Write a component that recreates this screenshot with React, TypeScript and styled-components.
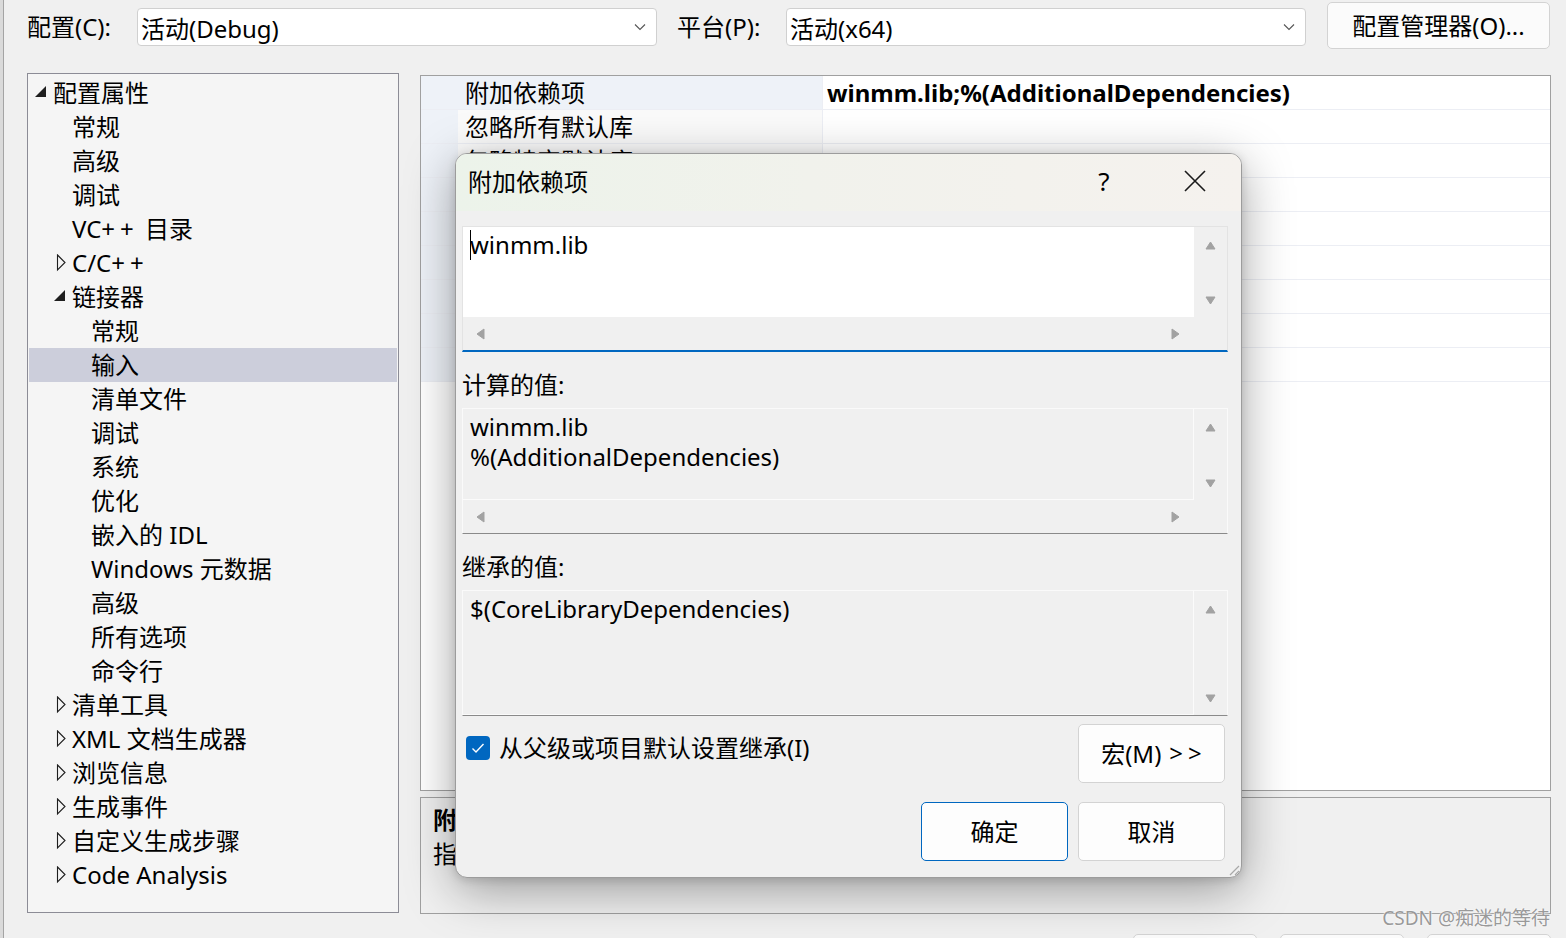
import React from 'react';
import styled, { createGlobalStyle } from 'styled-components';

const GlobalStyle = createGlobalStyle`
  * { box-sizing: border-box; }
  html, body {
    margin: 0;
    padding: 0;
    overflow: hidden;
    background: #f0f0f0;
  }
  body {
    font-family: "Noto Sans", "Noto Sans CJK SC", sans-serif;
    color: #000;
  }
`;

// Page frame
const Page = styled.div`
  position: relative;
  width: 1566px;
  height: 938px;
  display: flex;
  overflow: hidden;
`;

const WindowEdge = styled.div`
  flex: none;
  width: 4px;
  background: #dadada;
  border-right: 1px solid #a4a4a4;
`;

const Content = styled.div`
  flex: 1;
  display: flex;
  flex-direction: column;
  padding: 2px 16px 0 23px;
`;

// Top toolbar
const TopBar = styled.div`
  display: flex;
  align-items: flex-start;
  height: 47px;
`;

const BarLabel = styled.div<{ $width: number }>`
  width: ${({ $width }) => $width}px;
  margin-top: 6px;
  height: 38px;
  line-height: 38px;
  font-size: 24px;
  white-space: nowrap;
`;

const Select = styled.div`
  width: 520px;
  height: 38px;
  margin-top: 6px;
  margin-right: 20px;
  display: flex;
  align-items: center;
  justify-content: space-between;
  padding: 0 10px 0 3px;
  background: #fff;
  border: 1px solid #d0d0d0;
  border-radius: 4px;
  font-size: 24px;
`;

const ToolButton = styled.div`
  margin-left: 1px;
  width: 223px;
  height: 47px;
  display: flex;
  align-items: center;
  justify-content: center;
  padding-bottom: 2px;
  background: #fbfbfb;
  border: 1px solid #d3d3d3;
  border-radius: 5px;
  font-size: 24px;
`;

// Main area
const Main = styled.div`
  display: flex;
  gap: 21px;
  margin-top: 24px;
`;

const TreePanel = styled.div`
  flex: none;
  width: 372px;
  height: 840px;
  padding: 2px 1px;
  background: #f5f5f5;
  border: 1px solid #8c8c96;
`;

const TreeRow = styled.div<{ $level: number; $selected?: boolean }>`
  height: 34px;
  display: flex;
  align-items: center;
  padding-left: ${({ $level }) => 6 + $level * 19}px;
  background: ${({ $selected }) => ($selected ? '#cccedb' : 'transparent')};
  font-size: 24px;
  line-height: 34px;
  white-space: pre;
`;

const Plus = styled.span`
  letter-spacing: 5px;
`;

const ArrowSlot = styled.span`
  flex: none;
  width: 18px;
  height: 18px;
  display: flex;
`;

const RightCol = styled.div`
  flex: none;
  width: 1131px;
  margin-top: 2px;
  display: flex;
  flex-direction: column;
  gap: 6px;
`;

const GridPanel = styled.div`
  height: 716px;
  background: #fff;
  border: 1px solid #a0a0a0;
`;

const PropRow = styled.div`
  display: grid;
  grid-template-columns: 37px 365px 1fr;
  height: 34px;
  font-size: 24px;
  line-height: 33px;
  border-bottom: 1px solid #eceef4;
`;

const Gutter = styled.div`
  background: #eef2f8;
`;

const PropName = styled.div<{ $selected?: boolean }>`
  padding-left: 7px;
  background: ${({ $selected }) => ($selected ? '#eef2f8' : '#fafafa')};
  border-right: 1px solid #eceef4;
  white-space: nowrap;
  overflow: hidden;
`;

const PropValue = styled.div`
  padding-left: 4px;
  font-weight: 700;
  white-space: nowrap;
  overflow: hidden;
`;

const DescPanel = styled.div`
  height: 117px;
  padding: 5px 12px;
  background: #f0f0f0;
  border: 1px solid #a0a0a0;
  font-size: 24px;
  line-height: 34px;
  white-space: nowrap;
  overflow: hidden;
`;

const DescTitle = styled.div`
  font-weight: 700;
`;

const BottomBar = styled.div`
  display: flex;
  justify-content: flex-end;
  gap: 23px;
  margin-top: 20px;
`;

const BottomButton = styled.div`
  width: 124px;
  height: 40px;
  background: #fbfbfb;
  border: 1px solid #d3d3d3;
  border-radius: 5px;
`;

// Dialog overlay
const Dialog = styled.div`
  position: absolute;
  left: 455px;
  top: 153px;
  width: 787px;
  height: 725px;
  display: flex;
  flex-direction: column;
  background: #f0f0f0;
  border: 1px solid #9c9c9c;
  border-radius: 12px;
  overflow: hidden;
  box-shadow: 0 12px 50px rgba(0, 0, 0, 0.36), 0 2px 10px rgba(0, 0, 0, 0.14);
`;

const TitleBar = styled.div`
  flex: none;
  height: 57px;
  display: flex;
  align-items: center;
  padding: 0 23px 4px 12px;
  background: linear-gradient(90deg, #ecf3ea 0%, #f1f2ec 45%, #f5f2ee 100%);
  font-size: 24px;
`;

const TitleText = styled.div`
  flex: 1;
`;

const TitleButton = styled.div`
  width: 46px;
  height: 46px;
  display: flex;
  align-items: center;
  justify-content: center;
  font-size: 26px;
  & + & {
    margin-left: 45px;
  }
`;

const DialogBody = styled.div`
  flex: 1;
  display: flex;
  flex-direction: column;
  padding: 15px 13px 0 6px;
`;

const FieldBox = styled.div<{ $editable?: boolean; $hscroll?: boolean }>`
  height: 126px;
  display: grid;
  grid-template-columns: 1fr 33px;
  grid-template-rows: ${({ $hscroll }) => ($hscroll ? '1fr 33px' : '1fr')};
  background: #f0f0f0;
  border: 1px solid ${({ $editable }) => ($editable ? '#e3e3e3' : '#fafafa')};
  border-bottom: ${({ $editable }) => ($editable ? '2px solid #0067c0' : '1px solid #8a8a8a')};
`;

const FieldText = styled.div<{ $editable?: boolean }>`
  padding: 3px 7px 0;
  background: ${({ $editable }) => ($editable ? '#fff' : '#f0f0f0')};
  border: ${({ $editable }) => ($editable ? 'none' : '1px solid #fbfbfb')};
  border-left: none;
  border-top: none;
  font-size: 24px;
  line-height: 30px;
  white-space: pre;
  overflow: hidden;
`;

const Caret = styled.span`
  display: inline-block;
  width: 1px;
  height: 30px;
  margin-right: -1px;
  vertical-align: top;
  background: #000;
`;

const VScroll = styled.div`
  display: flex;
  flex-direction: column;
  align-items: center;
  justify-content: space-between;
  padding: 14px 0 12px;
`;

const HScroll = styled.div`
  display: flex;
  align-items: center;
  justify-content: space-between;
  padding: 0 14px 0 13px;
`;

const FieldLabel = styled.div`
  height: 56px;
  display: flex;
  align-items: flex-end;
  padding-bottom: 6px;
  font-size: 24px;
  line-height: 34px;
`;

const OptionRow = styled.div`
  display: flex;
  justify-content: space-between;
  align-items: flex-start;
  margin-top: 8px;
  padding-right: 3px;
`;

const CheckGroup = styled.label`
  display: flex;
  align-items: center;
  gap: 9px;
  padding: 11px 0 0 4px;
  font-size: 24px;
  line-height: 26px;
`;

const CheckBox = styled.span`
  width: 24px;
  height: 24px;
  display: flex;
  align-items: center;
  justify-content: center;
  background: #0067c0;
  border-radius: 4px;
`;

const DialogButton = styled.div<{ $primary?: boolean }>`
  width: 147px;
  height: 59px;
  display: flex;
  align-items: center;
  justify-content: center;
  padding-bottom: 3px;
  background: #fdfdfd;
  border: 1px solid ${({ $primary }) => ($primary ? '#0067c0' : '#d3d3d3')};
  border-radius: 5px;
  font-size: 24px;
`;

const Spaced = styled.span`
  margin-left: 8px;
  letter-spacing: 5px;
  margin-right: -5px;
`;

const Footer = styled.div`
  display: flex;
  justify-content: flex-end;
  gap: 10px;
  margin-top: 19px;
  padding-right: 3px;
`;

const Grip = styled.svg`
  position: absolute;
  right: 1px;
  bottom: 1px;
`;

const Watermark = styled.div`
  position: absolute;
  right: 16px;
  bottom: 7px;
  font-size: 19px;
  color: #999;
  text-shadow: 0 0 2px #fff, 0 0 1px #fff;
  white-space: nowrap;
`;

// Icons
const Chevron = () => (
  <svg width="12" height="8" viewBox="0 0 12 8">
    <path d="M1 1.5 L6 6.5 L11 1.5" fill="none" stroke="#555" strokeWidth="1.1" />
  </svg>
);

const TreeArrow = ({ open }: { open: boolean }) => (
  <svg width="18" height="18" viewBox="0 0 18 18">
    {open ? (
      <polygon points="11,2 11,13 0,13" fill="#1e1e1e" />
    ) : (
      <polygon points="3.5,1 11,8.5 3.5,16" fill="none" stroke="#1e1e1e" strokeWidth="1.1" />
    )}
  </svg>
);

const Tri = ({ dir }: { dir: 'up' | 'down' | 'left' | 'right' }) => {
  const pts = {
    up: '1,8 5.5,1 10,8',
    down: '1,1 5.5,8 10,1',
    left: '8,1 1,6 8,11',
    right: '1,1 8,6 1,11',
  }[dir];
  const vertical = dir === 'up' || dir === 'down';
  return (
    <svg width={vertical ? 11 : 9} height={vertical ? 9 : 12} viewBox={vertical ? '0 0 11 9' : '0 0 9 12'}>
      <polygon points={pts} fill="#a2a2a2" stroke="#a2a2a2" strokeWidth="1" strokeLinejoin="round" />
    </svg>
  );
};

const CloseIcon = () => (
  <svg width="22" height="22" viewBox="0 0 22 22">
    <path d="M1 1 L21 21 M21 1 L1 21" stroke="#1a1a1a" strokeWidth="1.6" />
  </svg>
);

const CheckMark = () => (
  <svg width="14" height="12" viewBox="0 0 14 12">
    <path d="M1.5 6.5 L5 10 L12.5 2" fill="none" stroke="#fff" strokeWidth="1.4" />
  </svg>
);

// "C++" is drawn with wide, spaced plus signs in the original font
const withPlus = (label: string) => {
  const parts = label.split('++');
  if (parts.length === 1) return label;
  return (
    <>
      {parts[0]}
      <Plus>++</Plus>
      {parts[1]}
    </>
  );
};

type TreeItem = { label: string; level: number; arrow?: 'open' | 'closed'; selected?: boolean };

const treeItems: TreeItem[] = [
  { label: '配置属性', level: 0, arrow: 'open' },
  { label: '常规', level: 1 },
  { label: '高级', level: 1 },
  { label: '调试', level: 1 },
  { label: 'VC++ 目录', level: 1 },
  { label: 'C/C++', level: 1, arrow: 'closed' },
  { label: '链接器', level: 1, arrow: 'open' },
  { label: '常规', level: 2 },
  { label: '输入', level: 2, selected: true },
  { label: '清单文件', level: 2 },
  { label: '调试', level: 2 },
  { label: '系统', level: 2 },
  { label: '优化', level: 2 },
  { label: '嵌入的 IDL', level: 2 },
  { label: 'Windows 元数据', level: 2 },
  { label: '高级', level: 2 },
  { label: '所有选项', level: 2 },
  { label: '命令行', level: 2 },
  { label: '清单工具', level: 1, arrow: 'closed' },
  { label: 'XML 文档生成器', level: 1, arrow: 'closed' },
  { label: '浏览信息', level: 1, arrow: 'closed' },
  { label: '生成事件', level: 1, arrow: 'closed' },
  { label: '自定义生成步骤', level: 1, arrow: 'closed' },
  { label: 'Code Analysis', level: 1, arrow: 'closed' },
];

// rows below the third lie fully under the dialog, so their names are not shown
const properties = [
  { name: '附加依赖项', value: 'winmm.lib;%(AdditionalDependencies)' },
  { name: '忽略所有默认库', value: '' },
  { name: '忽略特定默认库', value: '' },
  { name: '', value: '' },
  { name: '', value: '' },
  { name: '', value: '' },
  { name: '', value: '' },
  { name: '', value: '' },
  { name: '', value: '' },
];

const App = () => {
  return (
    <Page>
      <GlobalStyle />
      <WindowEdge />
      <Content>
        <TopBar>
          <BarLabel $width={110}>配置(C):</BarLabel>
          <Select>
            <span>活动(Debug)</span>
            <Chevron />
          </Select>
          <BarLabel $width={109}>平台(P):</BarLabel>
          <Select>
            <span>活动(x64)</span>
            <Chevron />
          </Select>
          <ToolButton>配置管理器(O)...</ToolButton>
        </TopBar>

        <Main>
          <TreePanel>
            {treeItems.map((item, i) => (
              <TreeRow key={i} $level={item.level} $selected={item.selected}>
                <ArrowSlot>{item.arrow && <TreeArrow open={item.arrow === 'open'} />}</ArrowSlot>
                {withPlus(item.label)}
              </TreeRow>
            ))}
          </TreePanel>

          <RightCol>
            <GridPanel>
              {properties.map((p, i) => (
                <PropRow key={i}>
                  <Gutter />
                  <PropName $selected={i === 0}>{p.name}</PropName>
                  <PropValue>{p.value}</PropValue>
                </PropRow>
              ))}
            </GridPanel>
            <DescPanel>
              <DescTitle>附加依赖项</DescTitle>
              <div>指定要添加到链接命令行的附加项。</div>
            </DescPanel>
          </RightCol>
        </Main>

        <BottomBar>
          <BottomButton />
          <BottomButton />
          <BottomButton />
        </BottomBar>
      </Content>

      <Dialog>
        <TitleBar>
          <TitleText>附加依赖项</TitleText>
          <TitleButton>?</TitleButton>
          <TitleButton>
            <CloseIcon />
          </TitleButton>
        </TitleBar>
        <DialogBody>
          <FieldBox $editable $hscroll>
            <FieldText $editable>
              <Caret />
              winmm.lib
            </FieldText>
            <VScroll>
              <Tri dir="up" />
              <Tri dir="down" />
            </VScroll>
            <HScroll>
              <Tri dir="left" />
              <Tri dir="right" />
            </HScroll>
          </FieldBox>

          <FieldLabel>计算的值:</FieldLabel>
          <FieldBox $hscroll>
            <FieldText>{'winmm.lib\n%(AdditionalDependencies)'}</FieldText>
            <VScroll>
              <Tri dir="up" />
              <Tri dir="down" />
            </VScroll>
            <HScroll>
              <Tri dir="left" />
              <Tri dir="right" />
            </HScroll>
          </FieldBox>

          <FieldLabel>继承的值:</FieldLabel>
          <FieldBox>
            <FieldText>$(CoreLibraryDependencies)</FieldText>
            <VScroll>
              <Tri dir="up" />
              <Tri dir="down" />
            </VScroll>
          </FieldBox>

          <OptionRow>
            <CheckGroup>
              <CheckBox>
                <CheckMark />
              </CheckBox>
              从父级或项目默认设置继承(I)
            </CheckGroup>
            <DialogButton>
              宏(M)<Spaced>&gt;&gt;</Spaced>
            </DialogButton>
          </OptionRow>

          <Footer>
            <DialogButton $primary>确定</DialogButton>
            <DialogButton>取消</DialogButton>
          </Footer>
        </DialogBody>
        <Grip width="14" height="14" viewBox="0 0 14 14">
          <path d="M13 4 L4 13 M13 9 L9 13" stroke="#a8a8a8" strokeWidth="1.2" />
        </Grip>
      </Dialog>

      <Watermark>CSDN @痴迷的等待</Watermark>
    </Page>
  );
};

export default App;
